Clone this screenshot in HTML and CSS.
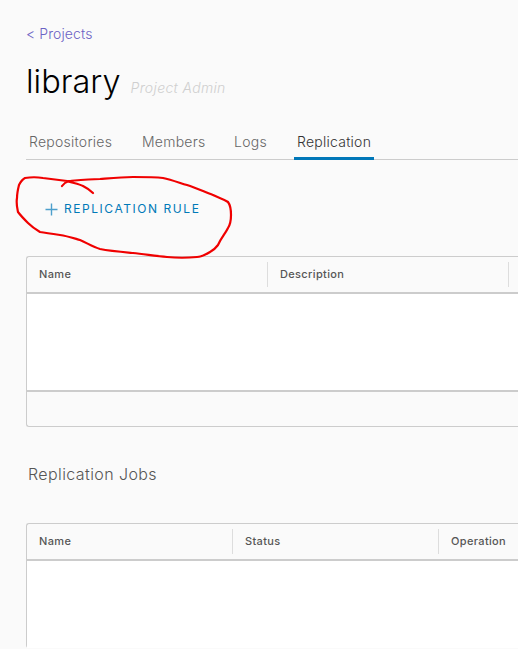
FILE: index.html
```html
<!DOCTYPE html>
<html lang="en">
<head>
    <meta charset="UTF-8">
    <meta name="viewport" content="width=device-width, initial-scale=1.0">
    <title>library - Replication</title>
    <link rel="stylesheet" href="styles.css">
</head>
<body>
    <div class="page">
        <a class="back-link">&lt; Projects</a>

        <div class="title-row">
            <h1>library</h1>
            <span class="role">Project Admin</span>
        </div>

        <div class="tabs">
            <a class="tab tab-repositories">Repositories</a>
            <a class="tab tab-members">Members</a>
            <a class="tab tab-logs">Logs</a>
            <a class="tab tab-replication active">Replication</a>
        </div>

        <button class="add-btn">
            <svg class="plus" width="13" height="13" viewBox="0 0 13 13"><path d="M6.5 0.5v12M0.5 6.5h12" /></svg>
            REPLICATION RULE
        </button>

        <!-- Rules grid -->
        <div class="grid rules-grid">
            <div class="grid-head">
                <div class="col col-rule-name">Name</div>
                <div class="col col-rule-desc">Description</div>
                <div class="col"></div>
            </div>
            <div class="grid-body rules-body"></div>
            <div class="grid-foot"></div>
        </div>

        <h2>Replication Jobs</h2>

        <!-- Jobs grid -->
        <div class="grid jobs-grid">
            <div class="grid-head">
                <div class="col col-job-name">Name</div>
                <div class="col col-job-status">Status</div>
                <div class="col">Operation</div>
            </div>
            <div class="grid-body jobs-body"></div>
        </div>
    </div>

    <!-- Red marker circled on top of the screenshot -->
    <svg class="marker" width="518" height="649" viewBox="0 0 518 649">
        <path d="M62 186 C64 183 66 182 69 181 C80 180 90 179 100 179 C112 178 122 177 133 177 C145 177 155 177 163 178 C172 180 180 183 187 185 C196 188 205 192 213 195 C219 198 224 199 228 202 C231 206 231 210 231 215 C231 220 230 225 228 228 C225 234 221 238 218 245 C215 249 212 251 210 252 C205 255 201 257 197 257 C187 258 177 258 167 257 C155 256 144 254 133 253 C122 252 110 251 100 249 C93 247 87 243 80 240 C73 238 67 236 60 235 C53 234 46 233 40 232 C35 229 32 227 28 223 C24 219 21 216 18 212 C17 207 16 203 17 198 C17 193 18 189 19 185 C21 181 23 179 25 178 C31 177 37 177 43 178 C51 179 59 180 67 181 C73 183 79 184 83 186 C87 188 90 190 93 193" />
    </svg>
</body>
</html>
```

FILE: styles.css
```css
/* General Styling */
body {
    margin: 0;
    height: 649px;
    overflow: hidden;
    position: relative;
    background-color: #fafafa;
    font-family: Inter, "Open Sans", sans-serif;
    color: #565656;
}

.page {
    padding: 25px 0 0 26px;
}

.back-link {
    display: block;
    font-size: 14px;
    line-height: 18px;
    font-weight: 300;
    letter-spacing: 0.1px;
    color: #6a62c4;
}

.title-row {
    display: flex;
    align-items: baseline;
    margin-top: 18px;
    height: 42px;
}

h1 {
    margin: 0;
    font-size: 32.5px;
    line-height: 42px;
    font-weight: 300;
    color: #000;
}

.role {
    margin-left: 10px;
    font-size: 14px;
    font-style: italic;
    font-weight: 300;
    letter-spacing: 0.35px;
    color: #cfcfcf;
}

/* Tabs */
.tabs {
    display: flex;
    margin-top: 19px;
    height: 37px;
    border-bottom: 1px solid #ccc;
}

.tab {
    padding-top: 2px;
    font-size: 14px;
    line-height: 36px;
    font-weight: 300;
    letter-spacing: 0.25px;
    color: #666;
}

.tab-repositories {
    margin-left: 3px;
    width: 113px;
}

.tab-members {
    width: 92px;
}

.tab-logs {
    width: 60px;
}

.tab-replication {
    padding: 2px 3px 0;
    height: 33px;
    color: #333;
}

.tab.active {
    border-bottom: 3px solid #0077b8;
}

/* Add rule button */
.add-btn {
    display: flex;
    align-items: center;
    gap: 6px;
    margin: 41px 0 0 19px;
    padding: 0;
    border: none;
    background: none;
    font-family: inherit;
    font-size: 12px;
    line-height: 16px;
    letter-spacing: 1.55px;
    color: #0079b8;
}

.plus {
    stroke: #4d9fcc;
    stroke-width: 1.4;
    fill: none;
}

/* Grids */
.grid {
    border: 1px solid #ccc;
    border-right: none;
    border-radius: 3px 0 0 3px;
    background: #fafafa;
}

.rules-grid {
    margin-top: 39px;
}

.jobs-grid {
    margin-top: 39px;
    border-bottom: none;
}

.grid-head {
    display: flex;
    height: 35px;
    border-bottom: 2px solid #ccc;
    font-size: 11px;
    font-weight: 500;
    letter-spacing: 0.35px;
}

.col {
    box-sizing: border-box;
    flex: none;
    margin-top: 5px;
    height: 25px;
    padding: 0 12px;
    line-height: 25px;
    white-space: nowrap;
    color: #565656;
}

.col + .col {
    border-left: 1px solid #ddd;
}

.col-rule-name {
    width: 240px;
}

.col-rule-desc {
    width: 241px;
}

.col-job-name {
    width: 205px;
}

.col-job-status {
    width: 206px;
}

.grid-body {
    background: #fff;
}

.rules-body {
    height: 96px;
    border-bottom: 2px solid #ccc;
}

.jobs-body {
    height: 87px;
}

.grid-foot {
    height: 34px;
}

h2 {
    margin: 37px 0 0 2px;
    font-size: 16px;
    line-height: 20px;
    font-weight: 300;
    letter-spacing: 0.4px;
    color: #565656;
}

/* Hand drawn circle */
.marker {
    position: absolute;
    top: 0;
    left: 0;
    pointer-events: none;
}

.marker path {
    fill: none;
    stroke: #f00000;
    stroke-width: 2.2;
    stroke-linecap: round;
}
```
